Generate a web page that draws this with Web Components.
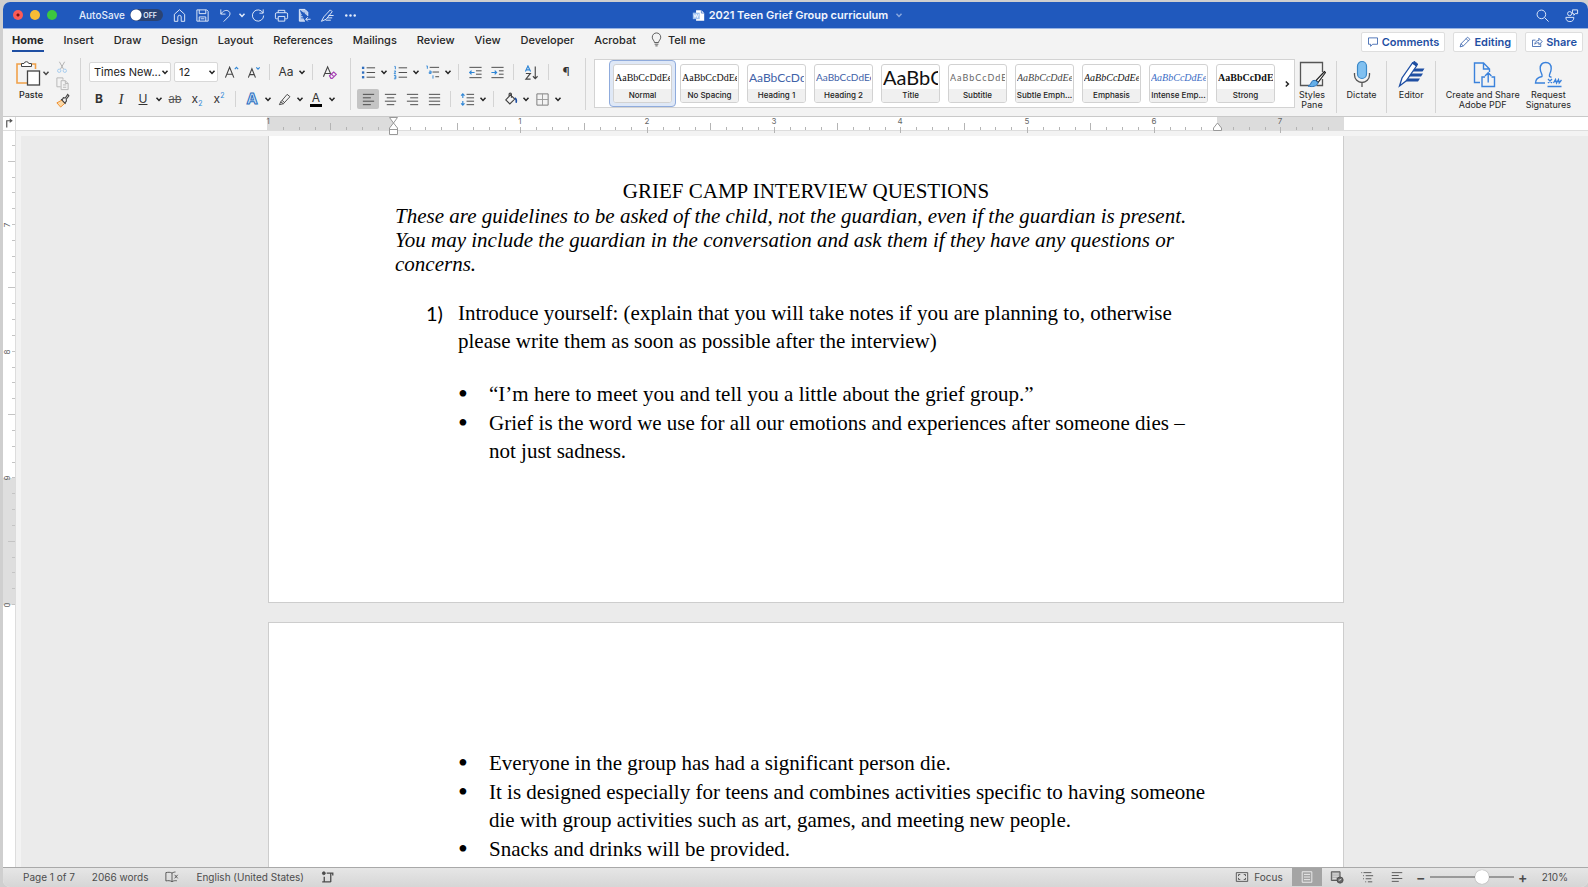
<!DOCTYPE html>
<html lang="en">
<head>
<meta charset="utf-8">
<title>2021 Teen Grief Group curriculum</title>
<style>
  html, body {
    height: 100%;
    margin: 0;
  }

  body {
    background: #cfcfcf;
    font-family: Inter, "Liberation Sans", sans-serif;
    font-size: 11px;
    color: #262626;
  }
</style>
</head>
<body>
<word-window></word-window>

<script>
const BLUE = '#2f86d6'
const NAVY = '#1f4fa3'

// Drawings are listed as [viewBox size, markup] and share the stroke set up in app-icon.
const icons = {
  caret: [10, '<path d="M2.5 3.8 5 6.4 7.5 3.8" stroke-width="1.5"/>'],
  next: [10, '<path d="M3.8 2.5 6.4 5 3.8 7.5" stroke-width="1.5"/>'],
  home: [16, '<path d="M2.5 14.2V6.7L8 1.8l5.500 4.900v7.500H9.800V9.600a1.800 1.800 0 0 0-3.600 0v4.600z"/>'],
  save: [16, '<path d="M2 2h10.500L14 3.500V14H2z"/><path d="M4.500 2v4h7V2M4.500 14V9.500h7V14M6 11.500h4"/>'],
  undo: [16, '<path d="M3 1.500v5h5M3 6.500C5 3 9 1.500 11.500 3.500c2 1.700 1.500 4 0 5.500L6 14.500"/>'],
  redo: [16, '<path d="M13 1.500V5.500H9M13.500 8A6 6 0 1 1 12.800 5.200"/>'],
  print: [16, '<path d="M4.500 5V2.500h7V5M4 11.500H2.500A1 1 0 0 1 1.500 10.500V6.500A1.500 1.500 0 0 1 3 5h10a1.500 1.500 0 0 1 1.500 1.500v4a1 1 0 0 1-1 1H12M4.500 9h7v5h-7z"/>'],
  exportDoc: [16, '<path d="M2.500 1.500h6l3 3v4M2.500 1.500v12.500h6" fill="currentColor" fill-opacity=".75"/><path d="M4.500 5.500h4M4.500 8h5M4.500 10.500h3" stroke="#2059bd"/><path d="M14.500 12H9.500M11.500 9.800 9.300 12l2.200 2.200"/>'],
  ink: [16, '<path d="M1.500 14.200 4 9.500l7-7.500 2 2-6.500 8zM9 8h5.500M7.500 10.500H13M6 13h5.500"/>'],
  dots: [16, '<g fill="currentColor" stroke="none"><circle cx="3.500" cy="8" r="1.300"/><circle cx="8" cy="8" r="1.300"/><circle cx="12.500" cy="8" r="1.300"/></g>'],
  search: [16, '<circle cx="6.800" cy="6.800" r="4.600"/><path d="m10.200 10.200 4.300 4.300"/>'],
  presence: [16, '<circle cx="6" cy="6" r="2.200"/><path d="M2 10h8.500c0 3-1.500 4.500-4.200 4.500S2 13 2 10zM9 2h5.500v4H12l-1.500 1.800V6H9z"/>'],
  wordFile: [16, '<path d="M5 1.500h6.500L15 5v9.500H5z" fill="#fff" stroke="none"/><path d="M11.500 1.500V5H15" stroke="#2059bd" stroke-width=".8"/><rect x="1" y="4.500" width="8.500" height="8" fill="#9fc1ee" stroke="none"/><path d="m2.500 6.500 1.200 4 1.500-4 1.500 4 1.300-4" stroke="#fff"/>'],
  bulb: [16, '<path d="M5.800 11.200C5.800 9 3.500 8.500 3.500 5.500a4.500 4.500 0 0 1 9 0c0 3-2.300 3.500-2.300 5.700zM6 13h4M6.800 14.800h2.400" stroke="#555"/>'],
  comment: [16, '<path d="M2 2.500h12v8.500H7.500L4.800 13.800V11H2z"/>'],
  pencil: [16, '<path d="m1.500 14.500 1.200-4.200L11.500 1.500l3 3-8.800 8.800zM9.500 3.500l3 3M2.700 10.300l3 3"/>'],
  share: [16, '<path d="M6 5.500H2v8.500h11V10M5 11c.5-3.500 2.500-5 5.500-5V3l4.500 4.500L10.500 11.500V9c-2.500-.2-4 .5-5.500 2z"/>'],
  paste: [26, '<path d="M6.500 4H2v19h10" stroke="#f0a14a" stroke-width="1.600"/><path d="M17 4h3.500v5" stroke="#f0a14a" stroke-width="1.600"/><path d="M6.500 6.500V3.500H9a2.500 2.500 0 0 1 4.800 0h2.700v3z" fill="#fff"/><rect x="12.500" y="11" width="12" height="14" fill="#fff" stroke-width="1.300"/>'],
  cut: [16, '<path d="m5 2 4.800 8.500M11 2 6.200 10.500" stroke="#aaa"/><circle cx="4.800" cy="12.300" r="1.900" stroke="#9ec8ee"/><circle cx="11.200" cy="12.300" r="1.900" stroke="#9ec8ee"/>'],
  copy: [16, '<path d="M6 11.500H2V2h6.500v2" stroke="#b5b5b5"/><path d="M6.500 5H11l3 3v6.500H6.500zM11 5v3h3M8.500 9.500h3.500M8.500 12h3.500" stroke="#b5b5b5"/>'],
  brush: [16, '<path d="m2 10.500 5.500-3 3 3.500-4.500 4z" fill="#fbd9a8" stroke="#ef8e2c"/><path d="m6.500 6.500 4.800 5.200M7.500 7.500 9 5l2 .3L13.500 1.500l1.300 1.500L12 6.500l.2 2-1.500 2" stroke-width="1.200"/>'],
  grow: [16, '<path d="M1.500 13.500 6 2.500l4.500 11M3 9.800h6" stroke-width="1.200"/><path d="M11.500 4.500 13.300 2.500l1.800 2" stroke="#2f86d6" stroke-width="1.200"/>'],
  shrink: [16, '<path d="M2.500 13.500 6.300 4l3.800 9.500M3.800 10.300h5" stroke-width="1.200"/><path d="M11 2.500 12.800 4.500l1.800-2" stroke="#2f86d6" stroke-width="1.200"/>'],
  clear: [16, '<path d="M1.500 12.500 6 2l3.500 8M3 9h5.500" stroke-width="1.200"/><path d="m8 11.500 4.500-4 2.700 2.500-4.300 4.200H9.500zM10 9.800l2.700 2.700" stroke="#a63fb5" stroke-width="1.200"/>'],
  highlight: [16, '<path d="M4 10.500 10.800 2.500l3 2.500-7 7.500zM4 10.500l-1.500 3 4.300-1M5.500 9l2.800 2.500"/>'],
  bullets: [16, '<path d="M6 3h9M6 8h9M6 13h9"/><g fill="#2f6fbf" stroke="none"><rect x="1" y="1.800" width="2.500" height="2.500"/><rect x="1" y="6.800" width="2.500" height="2.500"/><rect x="1" y="11.800" width="2.500" height="2.500"/></g>'],
  numbers: [16, '<path d="M6 3h9M6 8h9M6 13h9"/><path d="M1.500 1.500h1v3M1 6.500h2L1.200 9.300h2M1 11.300h2v3.400H1M1.500 13h1.500" stroke="#2f86d6"/>'],
  levels: [16, '<path d="M5 2.500h10M8 7.500h7M11 12.500h4"/><path d="M1.500 1h1v3M4.500 6.500h2v2.500h-2v-1.300h2M8.500 11v3.500" stroke="#2f86d6"/>'],
  outdent: [16, '<path d="M1.500 2.500h13M8.500 6.200h6M8.500 9.800h6M1.500 13.500h13"/><path d="M7 8H1.800M3.800 6 1.800 8l2 2" stroke="#2f86d6" stroke-width="1.300"/>'],
  indent: [16, '<path d="M1.500 2.500h13M9.500 6.200h5M9.500 9.800h5M1.500 13.500h13"/><path d="M1.500 8H7M5 6l2 2-2 2" stroke="#2f86d6" stroke-width="1.300"/>'],
  sort: [16, '<path d="m1.500 7 2.700-6L7 7M2.400 5.200h3.700" stroke="#2f86d6" stroke-width="1.200"/><path d="M2 9h4.800L2 15h5M12 1.500v13M9.500 12l2.500 2.500 2.500-2.500" stroke-width="1.200"/>'],
  left: [16, '<path d="M2 2.500h12M2 6.200h8.500M2 9.800h12M2 13.500h8.500"/>'],
  center: [16, '<path d="M2 2.500h12M4 6.200h8M2 9.800h12M4 13.500h8"/>'],
  right: [16, '<path d="M2 2.500h12M5.500 6.200H14M2 9.800h12M5.500 13.500H14"/>'],
  justify: [16, '<path d="M2 2.500h12M2 6.200h12M2 9.800h12M2 13.500h12"/>'],
  spacing: [16, '<path d="M7 2.500h8M7 6.200h8M7 9.800h8M7 13.500h8"/><path d="M3 2v4.500M1.200 3.800 3 2l1.800 1.800M3 9.500V14M1.200 12.200 3 14l1.800-1.800" stroke="#2f86d6" stroke-width="1.200"/>'],
  fill: [16, '<path d="m3 8.500 5-5.500 4.500 4.500-5.200 5.300zM6.500 4.500V2.500a1.200 1.200 0 0 1 2.500 0V6" stroke-width="1.200"/><path d="M12.500 6.500c1.500.5 2 2.500 1.500 5" stroke="#1f4fa3" stroke-width="1.800"/>'],
  borders: [16, '<path d="M2 2h12v12H2z" stroke="#777"/><path d="M8 2v12M2 8h12" stroke="#999"/>'],
  stylesPane: [28, '<path d="M24.500 12V2.500H2.500v23h9M24.500 19v6.500h-6" stroke="#555" stroke-width="1.300"/><path d="M26.500 11.500 18 20.500l2 2 7.500-10z" fill="#fff" stroke-width="1.200"/><path d="M17.500 20.500c-2-.5-4 .5-4.500 2.500-.5 1.500-1.500 2.500-3 3 4 1.300 9.500.5 10-3.500z" fill="#63aee8" stroke="#2a6fb5"/>'],
  dictate: [28, '<rect x="9.500" y="1.500" width="9" height="17" rx="4.500" fill="#80c0f0" stroke="#3a88c8" stroke-width="1.200"/><path d="M6.500 13v2a7.500 7.500 0 0 0 15 0v-2M14 22.500V27" stroke="#555" stroke-width="1.300"/>'],
  editor: [28, '<path d="M15.500 8.500H27.500l-2 3h-12zM13 13.500h13l-2 3H11zM11 18.500h12l-2 3H9z" fill="#1f4fa3" stroke="none"/><path d="M2.500 26 5 18 15.500 3l4 3L9 21z" fill="#fff" stroke="#1f4fa3" stroke-width="1.300"/><path d="m15.500 3 1.700-1.700 3.500 2.700-1.200 2z" fill="#1f4fa3" stroke="#1f4fa3"/>'],
  pdf: [28, '<path d="M11 22.500H5.500V3h9l6 6v3M14.500 3v6h6" stroke="#3a82dc" stroke-width="1.400"/><path d="M16 17h-3v9.500h12.500V17h-3M19.200 22.500v-9M16 16l3.200-3.200 3.200 3.200" stroke="#3a82dc" stroke-width="1.400"/>'],
  sign: [28, '<path d="M11 23H1.500c0-4 2-5.500 6.500-6.500 1-2-1.800-3.500-1.800-8 0-4 2.500-6 5.500-6s5.500 2 5.500 6c0 4.500-2.700 6-1.700 8l2 .8" stroke="#3a82dc" stroke-width="1.400"/><path d="m14 19 4 4m0-4-4 4M19.500 23l2-3.500 1 3.500 2-3.500.7 3.500 2.300-3M13.500 26.500h14" stroke="#3a82dc" stroke-width="1.300"/>'],
  proof: [16, '<path d="M8 3.500C6 2.300 3.500 2.500 1 3v9.500c2.500-.5 5-.5 7 .8V3.500c2-1.100 3-1.200 4-1.200M8 13.300c2-1.100 3.500-1.300 5.500-1M11 5.500l3.500 4m0-4-3.500 4"/>'],
  macro: [16, '<circle cx="3.500" cy="2.800" r="1.800" fill="currentColor"/><path d="M7 2.500h7.500v3M12 2.500V13.500M4 7v6.500M1.500 13.500H12" stroke-width="1.600"/>'],
  focus: [16, '<path d="M1.500 3h13v10h-13z"/><path d="M4 7V5.200h2M12 7V5.200h-2M4 9v1.800h2M12 9v1.800h-2"/>'],
  printView: [16, '<path d="M2.500 2h11v12h-11z"/><path d="M4.500 5h7M4.500 8h7M4.500 11h7"/>'],
  webView: [16, '<path d="M1.500 2h10v10h-10z" fill="#aaa"/><path d="M3 4.500h7M3 7h7M3 9.500h4" stroke="#eee"/><circle cx="11.500" cy="11.500" r="3.500" fill="#666"/><path d="M9.800 11.500h2l1-1.500" stroke="#eee"/>'],
  outlineView: [16, '<path d="M4 3h9M6.500 6.500H15M6.500 10H13M9 13.500h5M1.500 3h1M3.500 6.500h1M3.500 10h1M6 13.500h1"/>'],
  draftView: [16, '<path d="M2 3h12M2 6.300h8M2 9.700h12M2 13h8"/>'],
  tabStop: [16, '<path d="M5 14V5h5" stroke-width="1.600"/><path d="M9 2v6l4-3z" fill="currentColor" stroke="none"/>'],
}

class AppElement extends HTMLElement {
  connectedCallback() {
    if (this.shadowRoot) {
      return
    }
    const template = document.createElement('template')
    template.innerHTML = this.render()
    this.attachShadow({ mode: 'open' }).append(template.content.cloneNode(true))
  }
}

customElements.define('app-icon', class extends AppElement {
  render() {
    const [box, markup] = icons[this.getAttribute('name')]
    const size = this.getAttribute('size') || box
    return `
      <style>
        :host { display: inline-flex; flex: none; }
        svg { display: block; fill: none; stroke: currentColor; }
      </style>
      <svg width="${size}" height="${size}" viewBox="0 0 ${box} ${box}" aria-hidden="true">${markup}</svg>`
  }
})

/* A flat button: an icon or slotted glyph, and a caret when it opens a menu. */
customElements.define('tool-button', class extends AppElement {
  render() {
    const icon = this.getAttribute('icon')
    const label = this.getAttribute('label')
    return `
      <style>
        :host { display: inline-flex; align-items: center; flex: none; }
        button {
          display: flex; align-items: center; justify-content: center;
          height: 20px; padding: 0; border: 0; border-radius: 2px;
          background: none; color: inherit; font: inherit;
        }
        .main { width: var(--tool-width, 22px); }
        .menu { width: 10px; color: var(--caret-color, #222); }
        :host([pressed]) .main { background: #c4c4c4; }
      </style>
      <button class="main" aria-label="${label}">
        ${icon ? `<app-icon name="${icon}" size="${this.getAttribute('size') || 15}"></app-icon>` : '<slot></slot>'}
      </button>
      ${this.hasAttribute('menu') ? `<button class="menu" aria-label="${label} options"><app-icon name="caret"></app-icon></button>` : ''}`
  }
})

customElements.define('tool-divider', class extends AppElement {
  render() {
    return `
      <style>
        :host { display: block; flex: none; width: 1px; height: 16px; margin: 0 5px; background: #d4d4d4; }
        :host([tall]) { height: 52px; margin: 0; }
      </style>`
  }
})

customElements.define('tool-select', class extends AppElement {
  render() {
    return `
      <style>
        :host { display: grid; flex: none; align-items: center; }
        select, app-icon { grid-area: 1 / 1; }
        select {
          appearance: none; height: 20px; width: 100%; padding: 0 8px 0 4px;
          border: 1px solid #d8d8d8; border-radius: 2px;
          background: #fff; color: #222; font: inherit;
        }
        app-icon { justify-self: end; margin-right: 1px; pointer-events: none; color: #222; }
      </style>
      <select aria-label="${this.getAttribute('label')}"><option>${this.getAttribute('value')}</option></select>
      <app-icon name="caret"></app-icon>`
  }
})

customElements.define('title-bar', class extends AppElement {
  render() {
    return `
      <style>
        :host {
          display: grid; grid-template-columns: 1fr auto 1fr; align-items: center;
          height: 26px; padding: 0 5px 0 10px; background: #2059bd; color: #e4edfb;
          border-bottom: 1px solid #97b3e3;
          --tool-width: 23px; --caret-color: #e4edfb;
        }
        .side, .lights, .name, label { display: flex; align-items: center; }
        .lights { gap: 7px; margin-right: 22px; }
        .lights button { width: 10px; height: 10px; padding: 0; border: 0; border-radius: 50%; }
        .close { background: radial-gradient(circle, #7c1414 0 1px, #fc5b56 2px); }
        .minimize { background: #f6bc35; }
        .zoom { background: #3cc740; }
        label { position: relative; gap: 5px; margin-right: 5px; font-size: 10px; font-weight: 500; }
        input {
          appearance: none; width: 33px; height: 12px; margin: 0;
          border-radius: 6px; background: radial-gradient(circle at 6px 6px, #fff 5px, #2b4373 6px);
        }
        .state { position: absolute; right: 6px; font-size: 7px; font-weight: 600; }
        .name { gap: 4px; color: #f2f6fd; font-weight: 600; font-size: 11px; }
        .name app-icon:last-child { opacity: .5; margin-left: 2px; }
        .end { justify-content: flex-end; gap: 6px; }
      </style>
      <div class="side">
        <div class="lights">
          <button class="close" aria-label="Close"></button>
          <button class="minimize" aria-label="Minimize"></button>
          <button class="zoom" aria-label="Zoom"></button>
        </div>
        <label>AutoSave <input type="checkbox" role="switch"><span class="state">OFF</span></label>
        <tool-button icon="home" label="Home"></tool-button>
        <tool-button icon="save" label="Save"></tool-button>
        <tool-button icon="undo" label="Undo" menu></tool-button>
        <tool-button icon="redo" label="Repeat"></tool-button>
        <tool-button icon="print" label="Print"></tool-button>
        <tool-button icon="exportDoc" label="Export"></tool-button>
        <tool-button icon="ink" label="Editor"></tool-button>
        <tool-button icon="dots" label="More"></tool-button>
      </div>
      <div class="name"><app-icon name="wordFile" size="13"></app-icon>2021 Teen Grief Group curriculum<app-icon name="caret"></app-icon></div>
      <div class="side end">
        <tool-button icon="search" label="Search"></tool-button>
        <tool-button icon="presence" label="Presence"></tool-button>
      </div>`
  }
})

customElements.define('ribbon-tabs', class extends AppElement {
  render() {
    const tabs = ['Home', 'Insert', 'Draw', 'Design', 'Layout', 'References', 'Mailings', 'Review', 'View', 'Developer', 'Acrobat']
    return `
      <style>
        :host { display: flex; justify-content: space-between; height: 28px; padding: 0 5px 0 9px; }
        nav { display: flex; align-items: flex-start; gap: 20px; }
        a, .tell {
          box-sizing: border-box; height: 23px; padding-top: 3px;
          color: #262626; font-size: 11px; font-weight: 500; line-height: 16px; text-decoration: none;
        }
        a[aria-current] { border-bottom: 2px solid ${NAVY}; font-weight: 700; }
        .tell { display: flex; gap: 4px; padding: 3px 0 0; border: 0; background: none; font-family: inherit; margin-left: -7px; }
        .actions { display: flex; gap: 8px; padding-top: 3px; }
        .actions button {
          display: flex; align-items: center; gap: 3px; height: 20px; padding: 0 5px;
          border: 1px solid #dedede; border-radius: 2px; background: #fff;
          color: ${NAVY}; font: inherit; font-weight: 600;
        }
      </style>
      <nav>
        ${tabs.map((tab, i) => `<a href="#"${i ? '' : ' aria-current="page"'}>${tab}</a>`).join('')}
        <button class="tell"><app-icon name="bulb" size="15"></app-icon>Tell me</button>
      </nav>
      <div class="actions">
        <button><app-icon name="comment" size="12"></app-icon>Comments</button>
        <button><app-icon name="pencil" size="12"></app-icon>Editing</button>
        <button><app-icon name="share" size="12"></app-icon>Share</button>
      </div>`
  }
})

customElements.define('style-card', class extends AppElement {
  render() {
    return `
      <style>
        :host { display: block; flex: none; padding: 3px; border: 1px solid transparent; border-radius: 4px; }
        :host([selected]) { border-color: #8fabdc; background: #dfe8f6; }
        button {
          display: flex; flex-direction: column; box-sizing: border-box;
          width: 59px; height: 39px; padding: 0; overflow: hidden;
          border: 1px solid #d2d2d2; border-radius: 3px; background: #fff; font: inherit; color: #222;
        }
        .sample {
          align-self: stretch; height: 25px; margin: 0 1px; overflow: hidden;
          text-align: left; white-space: nowrap; font: var(--sample-font); line-height: 25px;
          color: var(--sample-color, #111); letter-spacing: var(--sample-spacing, normal);
        }
        .name { align-self: stretch; height: 13px; background: #f0f0f0; font-size: 8px; line-height: 12px; font-weight: 500; text-align: center; }
      </style>
      <button><span class="sample">${this.getAttribute('sample')}</span><span class="name"><slot></slot></span></button>`
  }
})

/* A tall ribbon command: a drawing over its caption. */
customElements.define('big-button', class extends AppElement {
  render() {
    return `
      <style>
        :host { display: block; flex: none; }
        button {
          display: flex; flex-direction: column; align-items: center; gap: 2px;
          padding: 0; border: 0; background: none; color: #262626;
          font: inherit; font-size: 9px; line-height: 10px; text-align: center;
        }
      </style>
      <button><app-icon name="${this.getAttribute('icon')}"></app-icon><span><slot></slot></span></button>`
  }
})

customElements.define('ribbon-bar', class extends AppElement {
  render() {
    return `
      <style>
        :host {
          display: flex; align-items: flex-start; height: 59px; padding: 0 17px 0 10px;
          border-bottom: 1px solid #c9c9c9; color: #444; overflow: hidden;
        }
        .clipboard { display: flex; width: 67px; padding-top: 2px; }
        .paste { display: flex; flex-direction: column; gap: 3px; width: 36px; padding-top: 1px; }
        .paste > div { display: flex; align-items: center; padding-left: 2px; }
        .paste span { font-size: 9px; line-height: 12px; color: #262626; text-align: center; font-weight: 500; }
        .column { display: flex; flex-direction: column; gap: 2px; margin-left: 4px; --tool-width: 18px; }
        .column tool-button { height: 15px; }
        .group { display: flex; flex-direction: column; gap: 7px; padding-top: 5px; }
        .row { display: flex; align-items: center; height: 20px; }
        .font { width: 262px; padding-left: 7px; }
        .font .row:first-child { padding-left: 1px; }
        .paragraph { width: 228px; padding-left: 6px; }
        tool-select + tool-select { margin: 0 2px 0 3px; }
        .family { width: 82px; }
        .size { width: 44px; }
        b, i, u, s, .glyph { font-size: 12px; line-height: 16px; color: #333; }
        i { font-family: "Liberation Serif", serif; font-size: 15px; }
        s { font-size: 11px; color: #555; }
        sub, sup { color: ${BLUE}; font-size: 7px; line-height: 0; }
        .outline { color: #cfe4f8; -webkit-text-stroke: 1px #2a6fc0; font-size: 15px; font-weight: 700; }
        .ink { border-bottom: 3px solid #000; padding: 0 2px; line-height: 13px; }
        .gallery {
          display: flex; flex: 0 1 auto; align-items: center; box-sizing: border-box;
          height: 49px; margin: 2px 0 0 8px; padding: 0 0 0 14px;
          border: 1px solid #d3d3d3; background: #fff;
        }
        .more { display: flex; flex: none; justify-content: center; width: 15px; padding: 0; border: 0; background: none; color: #222; }
        .tools { display: flex; flex: 1; justify-content: space-between; padding: 3px 0 0 3px; }
        .acrobat { display: flex; gap: 6px; }
        tool-divider[tall] { margin-top: 1px; }
        style-card {
          --sample-font: 10px "Liberation Serif", serif;
        }
        .h1 { --sample-font: 12px Lato, sans-serif; --sample-color: #3f62a8; }
        .h2 { --sample-font: 10px Lato, sans-serif; --sample-color: #3f62a8; }
        .title { --sample-font: 20px Lato, sans-serif; }
        .subtitle { --sample-font: 9px Lato, sans-serif; --sample-color: #666; --sample-spacing: 1px; }
        .subtle { --sample-font: italic 10px "Liberation Serif", serif; --sample-color: #444; }
        .emphasis { --sample-font: italic 10px "Liberation Serif", serif; }
        .intense { --sample-font: italic 10px "Liberation Serif", serif; --sample-color: #3b6cc5; }
        .strong { --sample-font: bold 10px "Liberation Serif", serif; }
      </style>
      <div class="clipboard">
        <div class="paste">
          <div><app-icon name="paste"></app-icon><tool-button icon="caret" size="10" label="Paste options" style="--tool-width: 10px"></tool-button></div>
          <span>Paste</span>
        </div>
        <div class="column">
          <tool-button icon="cut" size="14" label="Cut"></tool-button>
          <tool-button icon="copy" label="Copy"></tool-button>
          <tool-button icon="brush" label="Format Painter"></tool-button>
        </div>
      </div>
      <tool-divider tall></tool-divider>
      <div class="group font">
        <div class="row">
          <tool-select class="family" label="Font" value="Times New..."></tool-select>
          <tool-select class="size" label="Font size" value="12"></tool-select>
          <tool-button icon="grow" label="Increase font size"></tool-button>
          <tool-button icon="shrink" label="Decrease font size"></tool-button>
          <tool-divider></tool-divider>
          <tool-button label="Change case" menu><span class="glyph">Aa</span></tool-button>
          <tool-divider></tool-divider>
          <tool-button icon="clear" label="Clear formatting"></tool-button>
        </div>
        <div class="row">
          <tool-button label="Bold"><b>B</b></tool-button>
          <tool-button label="Italic"><i>I</i></tool-button>
          <tool-button label="Underline" menu><u>U</u></tool-button>
          <tool-button label="Strikethrough"><s>ab</s></tool-button>
          <tool-button label="Subscript"><span class="glyph">x<sub>2</sub></span></tool-button>
          <tool-button label="Superscript"><span class="glyph">x<sup>2</sup></span></tool-button>
          <tool-divider></tool-divider>
          <tool-button label="Text effects" menu><span class="glyph outline">A</span></tool-button>
          <tool-button icon="highlight" label="Highlight" menu></tool-button>
          <tool-button label="Font color" menu><span class="glyph ink">A</span></tool-button>
        </div>
      </div>
      <tool-divider tall></tool-divider>
      <div class="group paragraph">
        <div class="row">
          <tool-button icon="bullets" label="Bullets" menu></tool-button>
          <tool-button icon="numbers" label="Numbering" menu></tool-button>
          <tool-button icon="levels" label="Multilevel list" menu></tool-button>
          <tool-divider></tool-divider>
          <tool-button icon="outdent" label="Decrease indent"></tool-button>
          <tool-button icon="indent" label="Increase indent"></tool-button>
          <tool-divider></tool-divider>
          <tool-button icon="sort" label="Sort" style="--tool-width: 24px"></tool-button>
          <tool-divider></tool-divider>
          <tool-button label="Show formatting" style="--tool-width: 24px"><span class="glyph">¶</span></tool-button>
        </div>
        <div class="row">
          <tool-button icon="left" label="Align left" pressed></tool-button>
          <tool-button icon="center" label="Center"></tool-button>
          <tool-button icon="right" label="Align right"></tool-button>
          <tool-button icon="justify" label="Justify"></tool-button>
          <tool-divider></tool-divider>
          <tool-button icon="spacing" label="Line spacing" menu></tool-button>
          <tool-divider></tool-divider>
          <tool-button icon="fill" label="Shading" menu></tool-button>
          <tool-button icon="borders" label="Borders" menu></tool-button>
        </div>
      </div>
      <tool-divider tall></tool-divider>
      <div class="gallery">
        <style-card selected sample="AaBbCcDdEe">Normal</style-card>
        <style-card sample="AaBbCcDdEe">No Spacing</style-card>
        <style-card class="h1" sample="AaBbCcDd">Heading 1</style-card>
        <style-card class="h2" sample="AaBbCcDdEe">Heading 2</style-card>
        <style-card class="title" sample="AaBbC">Title</style-card>
        <style-card class="subtitle" sample="AaBbCcDdEe">Subtitle</style-card>
        <style-card class="subtle" sample="AaBbCcDdEe">Subtle Emph...</style-card>
        <style-card class="emphasis" sample="AaBbCcDdEe">Emphasis</style-card>
        <style-card class="intense" sample="AaBbCcDdEe">Intense Emp...</style-card>
        <style-card class="strong" sample="AaBbCcDdE">Strong</style-card>
        <button class="more" aria-label="More styles"><app-icon name="next"></app-icon></button>
      </div>
      <div class="tools">
        <big-button icon="stylesPane">Styles<br>Pane</big-button>
        <tool-divider tall></tool-divider>
        <big-button icon="dictate">Dictate</big-button>
        <tool-divider tall></tool-divider>
        <big-button icon="editor">Editor</big-button>
        <tool-divider tall></tool-divider>
        <div class="acrobat">
          <big-button icon="pdf">Create and Share<br>Adobe PDF</big-button>
          <big-button icon="sign">Request<br>Signatures</big-button>
        </div>
      </div>`
  }
})

// One inch of paper at the current zoom, in pixels.
const INCH = 380 / 3

customElements.define('page-ruler', class extends AppElement {
  render() {
    const width = Math.round(8.5 * INCH)
    let marks = ''
    for (let i = 1; i < 68; i++) {
      const x = Math.round(i * INCH / 8)
      const inch = i / 8 - 1
      if (i % 8 === 0 && i !== 8) {
        marks += `<text x="${x}" y="7">${inch}</text><path d="M${x + .5} 10v6"/>`
      } else if (i !== 8 && i !== 60) {
        marks += `<path d="M${x + .5} ${i % 4 ? 10 : 6}v${i % 4 ? 3 : 7}"/>`
      }
    }
    return `
      <style>
        :host { display: flex; justify-content: center; }
        svg { display: block; flex: none; overflow: visible; }
        text { font: 8px Inter, sans-serif; fill: #666; text-anchor: middle; }
        path { stroke: #b4b4b4; fill: none; }
        .margin { fill: #dcdcdc; }
        .marker { fill: #fff; stroke: #999; }
      </style>
      <svg width="${width}" height="19" viewBox="0 0 ${width} 19" role="img" aria-label="Horizontal ruler">
        <rect class="margin" width="127" height="13"/>
        <rect class="margin" x="950" width="${width - 950}" height="13"/>
        ${marks}
        <text x="1" y="7">1</text>
        <path class="marker" d="M122.500 .500h8l-4 5.500zM126.500 6l-4 5v6.500h8V11zM122.500 12.500h8"/>
        <path class="marker" d="M950.500 6l-4 5v2.500h8V11z"/>
      </svg>`
  }
})

customElements.define('side-ruler', class extends AppElement {
  render() {
    // Offset of the seven inch mark from the top of the ruler.
    const seven = 94
    let marks = ''
    for (let i = -5; i <= 24; i++) {
      const y = Math.round(seven + i * INCH / 8)
      const half = (i + 24) % 8 === 4
      marks += `<path d="M${half ? 5 : 9} ${y - .5}H13"/>`
    }
    const labels = ['7', '8', '9', '0'].map((n, i) => {
      const y = Math.round(seven + i * INCH)
      return `<text transform="translate(7 ${y}) rotate(-90)">${n}</text>`
    })
    return `
      <style>
        :host { display: block; width: 12px; background: #fff; border-right: 1px solid #ddd; overflow: hidden; }
        text { font: 8px Inter, sans-serif; fill: #666; text-anchor: middle; }
        path { stroke: #c4c4c4; }
      </style>
      <svg width="13" height="500" role="img" aria-label="Vertical ruler">
        <rect y="347" width="13" height="127" fill="#dedede"/>
        ${marks}${labels.join('')}
      </svg>`
  }
})

customElements.define('paper-sheet', class extends AppElement {
  render() {
    return `
      <style>
        :host {
          display: block; box-sizing: border-box; flex: none;
          width: 1076px; max-width: 100%; padding: 126px;
          border: 1px solid #cdcdcd; background: #fff; color: #000;
          font: 21px/24px "Liberation Serif", serif;
        }
        :host([continued]) { border-top: 0; padding-top: 43px; }
      </style>
      <slot></slot>`
  }
})

customElements.define('list-line', class extends AppElement {
  render() {
    const numbered = this.hasAttribute('number')
    return `
      <style>
        :host { display: flex; line-height: 28px; }
        :host(:not([number])) { padding-left: 63px; }
        :host(:not([number]):not(:first-child)) { margin-top: 1px; }
        :host([number]) { padding-left: 31px; }
        .marker { flex: none; ${numbered ? 'width: 32px; font-size: 20px; font-family: Lato, sans-serif;' : 'width: 31px; height: 28px; font-size: 28px;'} }
      </style>
      <span class="marker">${numbered ? this.getAttribute('number') : '•'}</span>
      <span><slot></slot></span>`
  }
})

customElements.define('status-bar', class extends AppElement {
  render() {
    return `
      <style>
        :host {
          display: flex; justify-content: space-between; box-sizing: border-box; height: 20px;
          padding: 0 20px 1px; border-top: 1px solid #a9a9a9;
          background: linear-gradient(#e6e6e6, #d6d6d6); color: #4c4c4c; font-size: 10px;
        }
        div { display: flex; align-items: center; }
        .info { gap: 17px; }
        button {
          display: flex; align-items: center; justify-content: center; gap: 5px;
          height: 18px; padding: 0; border: 0; background: none; color: inherit; font: inherit;
        }
        .view { width: 30px; }
        .view[aria-pressed="true"] { background: #a4a4a4; color: #f2f2f2; }
        .focus { margin-right: 9px; }
        .step { width: 18px; font-size: 14px; font-weight: 600; }
        input { appearance: none; width: 84px; height: 14px; margin: 0; background: linear-gradient(#999, #999) center / 100% 2px no-repeat; }
        input::-webkit-slider-thumb { appearance: none; width: 14px; height: 14px; border-radius: 50%; background: #fff; box-shadow: 0 0 1px #777; }
        .percent { margin-left: 10px; }
      </style>
      <div class="info">
        <span>Page 1 of 7</span>
        <span>2066 words</span>
        <button aria-label="Proofing"><app-icon name="proof" size="14"></app-icon></button>
        <span>English (United States)</span>
        <button aria-label="Macros"><app-icon name="macro" size="13"></app-icon></button>
      </div>
      <div>
        <button class="focus"><app-icon name="focus" size="14"></app-icon>Focus</button>
        <button class="view" aria-label="Print layout" aria-pressed="true"><app-icon name="printView" size="14"></app-icon></button>
        <button class="view" aria-label="Web layout"><app-icon name="webView" size="14"></app-icon></button>
        <button class="view" aria-label="Outline"><app-icon name="outlineView" size="14"></app-icon></button>
        <button class="view" aria-label="Draft"><app-icon name="draftView" size="14"></app-icon></button>
        <button class="step" aria-label="Zoom out">−</button>
        <input type="range" min="10" max="100" value="68" aria-label="Zoom">
        <button class="step" aria-label="Zoom in">+</button>
        <span class="percent">210%</span>
      </div>`
  }
})

customElements.define('word-window', class extends AppElement {
  render() {
    return `
      <style>
        :host {
          display: flex; flex-direction: column; box-sizing: border-box; height: 100vh;
          padding: 2px 0 0 3px;
        }
        .window {
          display: flex; flex: 1; flex-direction: column; min-height: 0; overflow: hidden;
          border-radius: 7px; background: #f3f3f3;
        }
        .rulers { display: flex; flex: none; height: 13px; background: #fff; border-bottom: 1px solid #ddd; }
        .corner { width: 12px; border-right: 1px solid #ddd; color: #555; }
        page-ruler { flex: 1; height: 13px; z-index: 1; padding-left: 6px; }
        .body { display: flex; flex: 1; min-height: 0; }
        .canvas {
          display: flex; flex: 1; flex-direction: column; align-items: center; gap: 19px;
          margin: 5px 0 0 5px; padding-left: 3px; min-width: 0; overflow: hidden; background: #ebebeb;
        }
        h1, p { margin: 0; font: inherit; }
        h1 { text-align: center; }
        p { margin: 1px 0 23px; font-style: italic; }
        .bullets { margin-top: 25px; }
        .first { min-height: 467px; padding-bottom: 0; }
      </style>
      <div class="window">
        <title-bar></title-bar>
        <ribbon-tabs></ribbon-tabs>
        <ribbon-bar></ribbon-bar>
        <div class="rulers">
          <div class="corner"><app-icon name="tabStop" size="12"></app-icon></div>
          <page-ruler></page-ruler>
        </div>
        <div class="body">
          <side-ruler></side-ruler>
          <main class="canvas">
            <paper-sheet class="first" continued>
              <h1>GRIEF CAMP INTERVIEW QUESTIONS</h1>
              <p>These are guidelines to be asked of the child, not the guardian, even if the guardian is present. You may include the guardian in the conversation and ask them if they have any questions or concerns.</p>
              <list-line role="listitem" number="1)">Introduce yourself: (explain that you will take notes if you are planning to, otherwise<br>please write them as soon as possible after the interview)</list-line>
              <div class="bullets" role="list">
                <list-line role="listitem">“I’m here to meet you and tell you a little about the grief group.”</list-line>
                <list-line role="listitem">Grief is the word we use for all our emotions and experiences after someone dies –<br>not just sadness.</list-line>
              </div>
            </paper-sheet>
            <paper-sheet>
              <div role="list">
                <list-line role="listitem">Everyone in the group has had a significant person die.</list-line>
                <list-line role="listitem">It is designed especially for teens and combines activities specific to having someone<br>die with group activities such as art, games, and meeting new people.</list-line>
                <list-line role="listitem">Snacks and drinks will be provided.</list-line>
              </div>
            </paper-sheet>
          </main>
        </div>
        <status-bar></status-bar>
      </div>`
  }
})
</script>
</body>
</html>
